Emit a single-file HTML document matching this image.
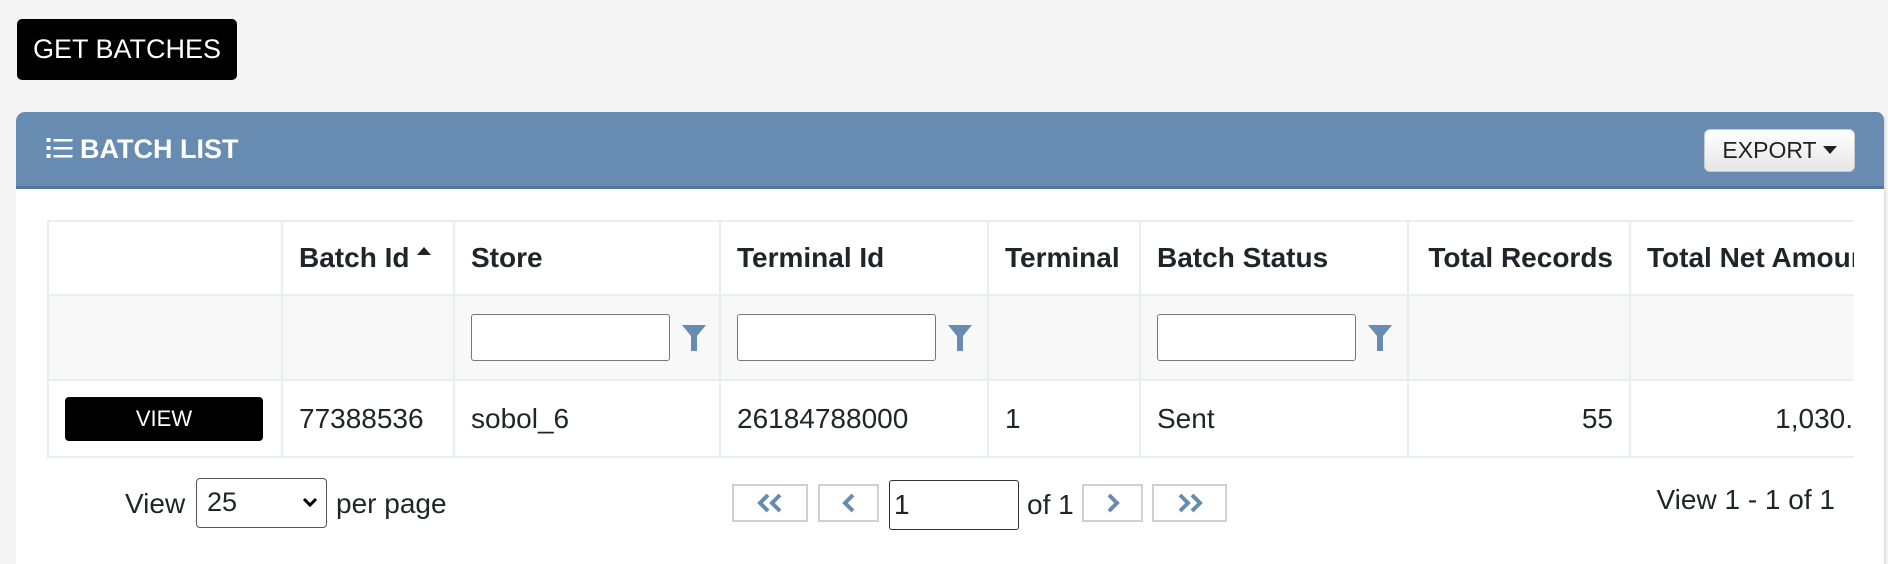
<!DOCTYPE html>
<html><head><style>
*{box-sizing:border-box;margin:0;padding:0}
html,body{width:1888px;height:564px;overflow:hidden}
body{background:#f4f4f4;font-family:"Liberation Sans",Arial,sans-serif;color:#212529;position:relative}
.a{position:absolute}
.btn{left:17px;top:19px;width:220px;height:61px;background:#000;color:#fff;border-radius:5px;font-size:27px;line-height:61px;text-align:center}
.panel{left:16px;top:112px;width:1870px;height:452px;background:#fff;border-radius:9px 9px 0 0;border-right:2px solid #e3e3e3;overflow:hidden}
.hdr{left:0;top:0;width:100%;height:77px;background:#678bb1;border-bottom:3px solid #54769c}
.title{left:30px;top:21px;color:#fff;font-weight:bold;font-size:27px;line-height:32px}
.exp{left:1688px;top:17px;width:151px;height:43px;background:linear-gradient(#fff,#e6e6e6);border:1px solid #ccc;border-radius:6px;font-size:23px;line-height:41px;text-align:center;color:#222}
.clip{position:absolute;left:31px;top:108px;width:1807px;height:250px;overflow:hidden}
table{border-collapse:collapse;table-layout:fixed;width:1900px}
td,th{border:2px solid #ebeeef;font-size:28px;text-align:left;padding:0 16px;white-space:nowrap;overflow:hidden}
th{height:74px;font-weight:bold}
tr.f td{height:85px;background:#f8f8f8}
tr.d td{height:77px}
input{width:199px;height:47px;border:1.5px solid #777;border-radius:3px;vertical-align:middle;background:#fff}
.fn{display:inline-block;vertical-align:middle;margin-left:12px}
.view{display:block;width:198px;height:44px;background:#000;color:#fff;border-radius:4px;text-align:center;line-height:44px;font-size:22px}
.ft{font-size:28px;line-height:32px}
.pb{height:38px;border:2px solid #d0d0d0;background:#fff;display:flex;align-items:center;justify-content:center}
</style></head><body>
<div class="a btn">GET BATCHES</div>
<div class="a panel">
 <div class="a hdr">
  <div class="a title"><svg width="28" height="24" viewBox="0 0 27 24" style="vertical-align:-2px;margin-right:6px"><rect x="0" y="2" width="4" height="4" fill="#fff"/><rect x="0" y="10" width="4" height="4" fill="#fff"/><rect x="0" y="18" width="4" height="4" fill="#fff"/><rect x="7" y="3" width="19" height="2.5" fill="#fff"/><rect x="7" y="11" width="19" height="2.5" fill="#fff"/><rect x="7" y="19" width="19" height="2.5" fill="#fff"/></svg>BATCH LIST</div>
  <div class="a exp">EXPORT <svg width="14" height="9" viewBox="0 0 14 9" style="vertical-align:3px"><path d="M0 0H14L7 8Z" fill="#222"/></svg></div>
 </div>
 <div class="clip">
 <table>
  <colgroup><col style="width:234px"><col style="width:172px"><col style="width:266px"><col style="width:268px"><col style="width:152px"><col style="width:268px"><col style="width:222px"><col style="width:318px"></colgroup>
  <tr><th></th><th>Batch Id <svg width="14" height="9" viewBox="0 0 14 9" style="vertical-align:12px"><path d="M0 9H14L7 1Z" fill="#222"/></svg></th><th>Store</th><th>Terminal Id</th><th>Terminal</th><th>Batch Status</th><th style="text-align:right">Total Records</th><th>Total Net Amount</th></tr>
  <tr class="f"><td></td><td></td>
   <td><input><svg class="fn" width="24" height="26" viewBox="0 0 24 26"><path d="M0 0H24L15 11V26H9V11Z" fill="#678bb1"/></svg></td>
   <td><input><svg class="fn" width="24" height="26" viewBox="0 0 24 26"><path d="M0 0H24L15 11V26H9V11Z" fill="#678bb1"/></svg></td>
   <td></td>
   <td><input><svg class="fn" width="24" height="26" viewBox="0 0 24 26"><path d="M0 0H24L15 11V26H9V11Z" fill="#678bb1"/></svg></td>
   <td></td><td></td></tr>
  <tr class="d"><td><span class="view">VIEW</span></td><td>77388536</td><td>sobol_6</td><td>26184788000</td><td>1</td><td>Sent</td><td style="text-align:right">55</td><td style="text-align:right;padding-right:94px">1,030.</td></tr>
 </table>
 </div>
 <div class="a ft" style="left:109px;top:376px">View</div>
 <div class="a" style="left:180px;top:366px;width:131px;height:50px;border:1.5px solid #555;border-radius:4px;background:#fff;font-size:27px;line-height:46px;padding-left:10px">25<svg style="position:absolute;right:8px;top:18px" width="16" height="10" viewBox="0 0 16 10"><path d="M2 2L8 8L14 2" stroke="#000" stroke-width="3" fill="none"/></svg></div>
 <div class="a ft" style="left:320px;top:376px">per page</div>
 <div class="a pb" style="left:716px;top:372px;width:76px"><svg width="30" height="20" viewBox="0 0 30 20"><path d="M13 2L5 10L13 18M25 2L17 10L25 18" stroke="#678bb1" stroke-width="4" fill="none"/></svg></div>
 <div class="a pb" style="left:802px;top:372px;width:61px"><svg width="14" height="20" viewBox="0 0 14 20"><path d="M11 2L3 10L11 18" stroke="#678bb1" stroke-width="4" fill="none"/></svg></div>
 <div class="a" style="left:873px;top:368px;width:130px;height:50px;border:1.5px solid #333;border-radius:3px;background:#fff;font-size:28px;line-height:47px;padding-left:4px">1</div>
 <div class="a ft" style="left:1011px;top:377px">of 1</div>
 <div class="a pb" style="left:1066px;top:372px;width:61px"><svg width="14" height="20" viewBox="0 0 14 20"><path d="M3 2L11 10L3 18" stroke="#678bb1" stroke-width="4" fill="none"/></svg></div>
 <div class="a pb" style="left:1136px;top:372px;width:75px"><svg width="30" height="20" viewBox="0 0 30 20"><path d="M5 2L13 10L5 18M17 2L25 10L17 18" stroke="#678bb1" stroke-width="4" fill="none"/></svg></div>
 <div class="a ft" style="right:49px;top:372px">View 1 - 1 of 1</div>
</div>
</body></html>
